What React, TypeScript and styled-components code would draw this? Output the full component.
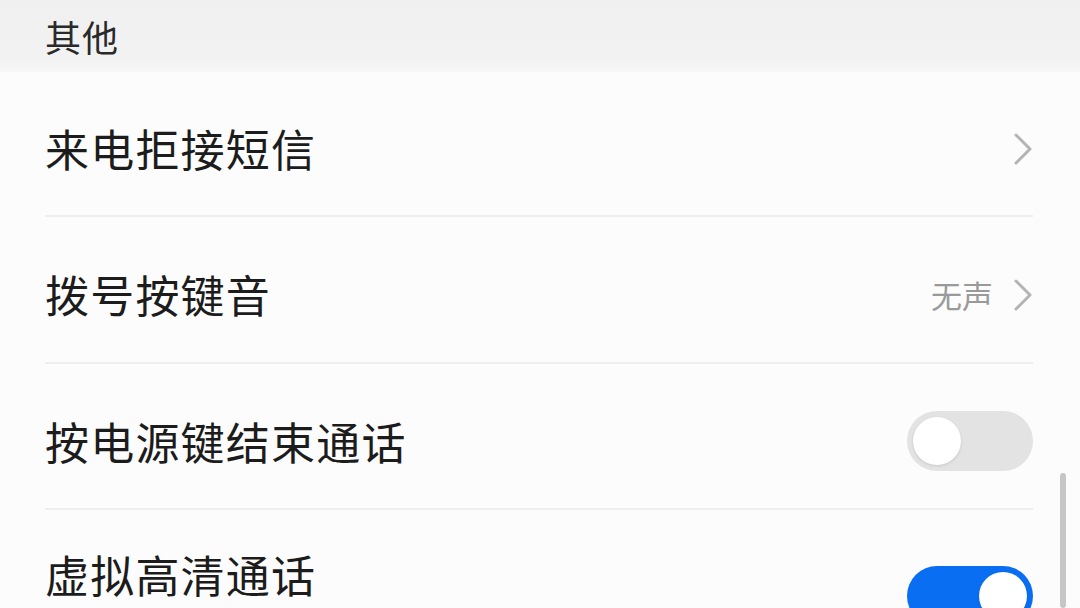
import React from "react";
import styled, { createGlobalStyle } from "styled-components";

const Global = createGlobalStyle`
  html, body {
    margin: 0;
    padding: 0;
    background: #fcfcfc;
    overflow: hidden;
  }
  body {
    font-family: "Noto Sans CJK SC", "Noto Sans", sans-serif;
  }
`;

const Screen = styled.div`
  position: relative;
  width: 1080px;
  height: 608px;
  overflow: hidden;
  display: flex;
  flex-direction: column;
  background: #fcfcfc;
`;

const SectionHeader = styled.div`
  height: 72px;
  flex: none;
  display: flex;
  align-items: center;
  padding: 0 0 0 45px;
  box-sizing: border-box;
  background: linear-gradient(#f0f0f0, #f2f2f2 85%, #f7f7f7);
  color: #2a2a2a;
  font-size: 36px;
  letter-spacing: 1px;
  line-height: 1;
`;

const Row = styled.div<{ $h: number; $pt?: number }>`
  flex: none;
  height: ${(p) => p.$h}px;
  padding: ${(p) => p.$pt ?? 10}px 47px 0 45px;
  box-sizing: border-box;
  display: flex;
`;

const RowInner = styled.div<{ $divider: boolean }>`
  flex: 1;
  display: flex;
  align-items: center;
  justify-content: space-between;
  border-bottom: ${(p) => (p.$divider ? "2px solid #efefef" : "none")};
`;

const Title = styled.div<{ $top?: number }>`
  font-size: 44px;
  line-height: 53px;
  color: #1c1c1c;
  letter-spacing: 1.2px;
  ${(p) => (p.$top !== undefined ? `align-self: flex-start; margin-top: ${p.$top}px;` : "")}
`;

const Trailing = styled.div`
  display: flex;
  align-items: center;
  gap: 20px;
`;

const Value = styled.span`
  font-size: 31px;
  color: #9a9a9a;
  line-height: 1;
`;

const Track = styled.div<{ $on: boolean }>`
  width: 126px;
  height: 60px;
  border-radius: 30px;
  box-sizing: border-box;
  padding: 6px;
  display: flex;
  justify-content: ${(p) => (p.$on ? "flex-end" : "flex-start")};
  background: ${(p) => (p.$on ? "#0a6ef3" : "#e3e3e3")};
`;

const Knob = styled.div`
  width: 48px;
  height: 48px;
  border-radius: 50%;
  background: #ffffff;
  box-shadow: 0 1px 3px rgba(0, 0, 0, 0.12);
`;

const Scrollbar = styled.div`
  position: absolute;
  left: 1060px;
  top: 473px;
  bottom: 0;
  width: 6px;
  border-radius: 3px;
  background: #c6c6c6;
`;

const Chevron = () => (
  <svg width="20" height="32" viewBox="0 0 20 32">
    <polyline
      points="3,2 17,16 3,30"
      fill="none"
      stroke="#b4b4b4"
      strokeWidth="3"
      strokeLinecap="round"
      strokeLinejoin="round"
    />
  </svg>
);

const Toggle = ({ on }: { on: boolean }) => (
  <Track $on={on}>
    <Knob />
  </Track>
);

export default function App() {
  return (
    <>
      <Global />
      <Screen>
        <SectionHeader>其他</SectionHeader>
        <Row $h={145}>
          <RowInner $divider>
            <Title>来电拒接短信</Title>
            <Trailing>
              <Chevron />
            </Trailing>
          </RowInner>
        </Row>
        <Row $h={147}>
          <RowInner $divider>
            <Title>拨号按键音</Title>
            <Trailing>
              <Value>无声</Value>
              <Chevron />
            </Trailing>
          </RowInner>
        </Row>
        <Row $h={146}>
          <RowInner $divider>
            <Title>按电源键结束通话</Title>
            <Trailing>
              <Toggle on={false} />
            </Trailing>
          </RowInner>
        </Row>
        <Row $h={172} $pt={0}>
          <RowInner $divider={false}>
            <Title $top={38}>虚拟高清通话</Title>
            <Trailing>
              <Toggle on />
            </Trailing>
          </RowInner>
        </Row>
        <Scrollbar />
      </Screen>
    </>
  );
}
